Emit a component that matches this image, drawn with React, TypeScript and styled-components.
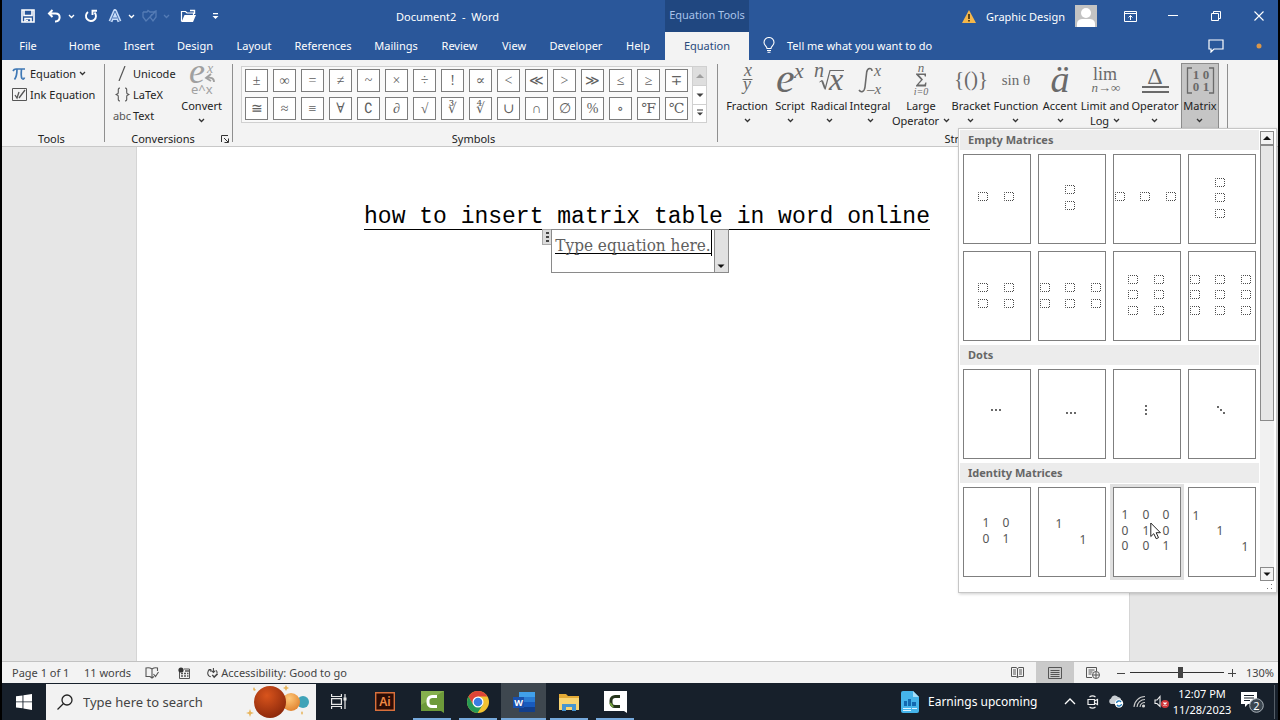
import React from "react";
import styled, { createGlobalStyle, css } from "styled-components";

const ui = `"Noto Sans", "Open Sans", sans-serif`;
const serif = `"Liberation Serif", "DejaVu Serif", serif`;

const GlobalStyle = createGlobalStyle`
  * { box-sizing: border-box; }
  body { margin: 0; background: #000; font-family: ${ui}; font-size: 11px; line-height: 15px; color: #262626; }
  button, input { font: inherit; color: inherit; border: 0; padding: 0; margin: 0; background: none; }
  h1, h2, p { margin: 0; font-size: inherit; font-weight: inherit; }
`;

const Desktop = styled.div`
  min-height: 100vh;
  display: flex;
  flex-direction: column;
  padding: 0 2px;
`;

const WordWindow = styled.div`
  position: relative;
  flex: 1;
  display: flex;
  flex-direction: column;
  background: #f3f3f3;
`;

/* Title bar and tabs */

const Header = styled.header`
  background: #2a579a;
  color: #fff;
`;

const TitleBar = styled.div`
  display: flex;
  align-items: center;
  height: 32px;
`;

const QuickAccess = styled.div`
  display: flex;
  align-items: center;
  padding-left: 13px;
`;

const IconButton = styled.button<{ $w: number; $dim?: boolean }>`
  display: flex;
  align-items: center;
  justify-content: center;
  width: ${(p) => p.$w}px;
  height: 28px;
  opacity: ${(p) => (p.$dim ? 0.3 : 1)};
`;

const WindowTitle = styled.h1`
  width: 440px;
  padding-left: 171px;
  white-space: pre;
`;

const ContextTitle = styled.div`
  width: 84px;
  height: 32px;
  line-height: 30px;
  text-align: center;
  white-space: nowrap;
  background: #204780;
  color: #a9c3ea;
`;

const Account = styled.div`
  display: flex;
  align-items: center;
  gap: 10px;
  margin-left: auto;
  padding-right: 14px;
  white-space: nowrap;
`;

const WindowControls = styled.div`
  display: flex;
  gap: 5px;
`;

const TabRow = styled.nav`
  display: flex;
  height: 28px;
`;

const Tab = styled.button<{ $w: number; $active?: boolean }>`
  width: ${(p) => p.$w}px;
  height: 28px;
  padding-bottom: 2px;
  white-space: nowrap;
  text-align: center;
  ${(p) =>
    p.$active &&
    css`
      margin-left: 5px;
      background: #f3f3f3;
      color: #2a4a7c;
    `}
`;

const TellMe = styled.button`
  display: flex;
  align-items: center;
  gap: 12px;
  padding: 0 0 2px 14px;
  margin-right: auto;
`;

/* Ribbon */

const Ribbon = styled.section`
  display: flex;
  height: 87px;
  border-bottom: 1px solid #c8c8c8;
  background: #f3f3f3;
  color: #222;
`;

const Group = styled.div<{ $w: number }>`
  position: relative;
  display: flex;
  flex-direction: column;
  justify-content: space-between;
  width: ${(p) => p.$w}px;
  padding-top: 3px;
  &::after {
    content: "";
    position: absolute;
    right: 0;
    top: 4px;
    bottom: 4px;
    border-right: 1px solid #8f8f8f;
  }
`;

const GroupBody = styled.div`
  display: flex;
`;

const GroupLabel = styled.div`
  display: flex;
  align-items: center;
  height: 15px;
  padding-right: 4px;
  span { flex: 1; text-align: center; }
`;

const CommandList = styled.div`
  display: flex;
  flex-direction: column;
  padding: 0 0 0 9px;
`;

const Command = styled.button`
  display: flex;
  align-items: center;
  gap: 3px;
  height: 21px;
  white-space: nowrap;
  & > i {
    display: flex;
    justify-content: center;
    width: 16px;
    font-style: normal;
    color: #555;
  }
`;

const BigButton = styled.button<{ $w: number; $pressed?: boolean }>`
  display: flex;
  flex-direction: column;
  align-items: center;
  width: ${(p) => p.$w}px;
  height: 66px;
  white-space: nowrap;
  text-align: center;
  color: #222;
  ${(p) =>
    p.$pressed &&
    css`
      background: #c5c5c5;
      outline: 1px solid #8c8c8c;
      outline-offset: -1px;
    `}
`;

const BigIcon = styled.svg`
  flex: none;
  width: 40px;
  height: 35px;
  overflow: visible;
  fill: #6a6a6a;
  font-family: ${serif};
`;

const BigLabel = styled.span`
  display: flex;
  flex-direction: column;
  align-items: center;
  line-height: 15px;
`;

const LastLine = styled.span`
  display: flex;
  align-items: center;
  gap: 4px;
  min-height: 15px;
`;

const Gallery = styled.div`
  display: flex;
  margin: 3px 0 0 8px;
  border: 1px solid #d0d0d0;
  background: #f9f9f9;
`;

const SymbolGrid = styled.div`
  display: grid;
  grid-template-columns: repeat(16, 23px);
  grid-auto-rows: 23px;
  gap: 5px;
  padding: 2px 4px 2px 3px;
`;

const SymbolButton = styled.button`
  border: 1px solid #7d7d7d;
  background: #fff;
  color: #606060;
  font-family: ${serif};
  font-size: 14px;
  line-height: 20px;
  text-align: center;
`;

const GalleryScroll = styled.div`
  display: grid;
  grid-template-rows: 1fr 1fr 1fr;
  width: 14px;
  margin-left: auto;
  border-left: 1px solid #d0d0d0;
`;

const GalleryStep = styled.button<{ $off?: boolean }>`
  display: flex;
  align-items: center;
  justify-content: center;
  background: ${(p) => (p.$off ? "#dedede" : "#fff")};
  svg { opacity: ${(p) => (p.$off ? 0.3 : 0.8)}; }
  & + & { border-top: 1px solid #d0d0d0; }
`;

const Structures = styled.div`
  display: flex;
  padding-left: 7px;
`;

/* Document */

const Canvas = styled.main`
  flex: 1;
  display: flex;
  justify-content: center;
  padding-right: 15px;
  background: #e6e6e6;
`;

const Page = styled.article`
  display: flex;
  flex-direction: column;
  align-items: center;
  width: 100%;
  max-width: 994px;
  padding-top: 56px;
  background: #fff;
  border-left: 1px solid #d5d5d5;
  border-right: 1px solid #d5d5d5;
`;

const DocHeading = styled.h2`
  height: 27px;
  margin-left: 29px;
  padding-top: 1px;
  border-bottom: 1px solid #000;
  color: #000;
  font-family: "Liberation Mono", monospace;
  font-size: 23px;
  line-height: 26px;
  white-space: nowrap;
`;

const Equation = styled.div`
  display: flex;
  align-items: flex-start;
  margin-left: 6px;
  margin-top: -1px;
`;

const EquationHandle = styled.button`
  display: flex;
  align-items: center;
  justify-content: center;
  width: 9px;
  height: 16px;
  border: 1px solid #aaa;
  border-right: 0;
  background: #dcdcdc;
`;

const EquationFrame = styled.div`
  display: flex;
  height: 44px;
  border: 1px solid #8a8a8a;
  background: #fff;
`;

const EquationText = styled.p`
  height: 26px;
  margin: 0 2px 0 3px;
  padding-top: 4px;
  border-right: 1px solid #000;
  color: #5f5f5f;
  font-family: "DejaVu Serif Condensed", "Liberation Serif", serif;
  font-size: 17px;
  line-height: 22px;
  white-space: nowrap;
  span {
    display: block;
    height: 20px;
    border-bottom: 1px solid #000;
  }
`;

const EquationMenu = styled.button`
  display: flex;
  align-items: flex-end;
  justify-content: center;
  width: 14px;
  padding-bottom: 2px;
  border-left: 1px solid #8a8a8a;
  background: #e1e1e1;
`;

/* Matrix menu */

const Menu = styled.div`
  position: absolute;
  top: 128px;
  right: 1px;
  display: flex;
  width: 319px;
  padding: 1px 2px 11px 1px;
  border: 1px solid #c6c6c6;
  background: #fff;
  box-shadow: 1px 1px 3px rgba(0, 0, 0, 0.2);
`;

const MenuBody = styled.div`
  flex: 1;
`;

const MenuHeading = styled.h2`
  height: 20px;
  padding-left: 8px;
  background: #ececec;
  color: #666;
  font-weight: 700;
  line-height: 19px;
`;

const MenuGrid = styled.div`
  display: grid;
  grid-template-columns: repeat(4, 68px);
  grid-auto-rows: 90px;
  gap: 7px;
  padding: 4px 3px;
`;

const Tile = styled.button<{ $hover?: boolean }>`
  border: 1px solid #7f7f7f;
  background: #fff;
  box-shadow: ${(p) => (p.$hover ? "0 0 0 3px #e0e0e0" : "none")};
  svg {
    display: block;
    overflow: visible;
  }
`;

const MenuScroll = styled.div`
  display: flex;
  flex-direction: column;
  width: 14px;
  margin: 1px 0 0 1px;
  background: #f1f1f1;
`;

const ScrollStep = styled.button`
  display: flex;
  align-items: center;
  justify-content: center;
  height: 14px;
  border: 1px solid #8a8a8a;
  background: #f3f3f3;
`;

const ScrollThumb = styled.div`
  height: 276px;
  margin-bottom: auto;
  border: 1px solid #8a8a8a;
  background: #e6e6e6;
`;

const Grip = styled.svg`
  position: absolute;
  right: 3px;
  bottom: 2px;
`;

const Pointer = styled.svg`
  position: absolute;
  left: 191px;
  top: 393px;
`;

/* Status bar */

const StatusBar = styled.footer`
  display: flex;
  align-items: center;
  height: 22px;
  padding: 0 4px 0 10px;
  border-top: 1px solid #c2c2c2;
  background: #f3f3f3;
  color: #444;
  white-space: nowrap;
`;

const StatusItem = styled.button<{ $w: number }>`
  display: flex;
  align-items: center;
  gap: 3px;
  width: ${(p) => p.$w}px;
`;

const ViewButtons = styled.div`
  display: flex;
  margin-right: 4px;
`;

const ViewButton = styled.button<{ $on?: boolean }>`
  display: flex;
  align-items: center;
  justify-content: center;
  width: 38px;
  height: 21px;
  background: ${(p) => (p.$on ? "#cacaca" : "transparent")};
`;

const StatusRight = styled.div`
  display: flex;
  align-items: center;
  margin-left: auto;
`;

const ZoomButton = styled.button`
  display: flex;
  width: 10px;
  justify-content: center;
`;

const ZoomSlider = styled.input`
  appearance: none;
  width: 94px;
  height: 12px;
  margin: 0 3px 0 4px;
  background: linear-gradient(#333, #333) center / 100% 1px no-repeat;
  &::-webkit-slider-thumb {
    appearance: none;
    width: 5px;
    height: 11px;
    background: #444;
  }
`;

const ZoomValue = styled.span`
  width: 37px;
  text-align: right;
`;

/* Taskbar */

const Taskbar = styled.div`
  display: flex;
  align-items: stretch;
  height: 37px;
  background: #17202b;
  color: #fff;
`;

const TaskButton = styled.button<{ $w: number; $open?: boolean; $active?: boolean }>`
  display: flex;
  align-items: center;
  justify-content: center;
  width: ${(p) => p.$w}px;
  background: ${(p) => (p.$active ? "#3e474f" : "transparent")};
  box-shadow: ${(p) => (p.$open || p.$active ? "inset 0 -2px #76a9dc" : "none")};
  border-left: ${(p) => (p.$open ? "4px solid transparent" : "0")};
  border-right: ${(p) => (p.$open ? "4px solid transparent" : "0")};
`;

const Search = styled.label`
  display: flex;
  align-items: center;
  width: 270px;
  padding: 0 2px 0 11px;
  border-top: 1px solid #17202b;
  background: #f2f2f2;
  color: #333;
  input {
    flex: 1;
    min-width: 0;
    padding-left: 10px;
    font-size: 13px;
    outline: none;
  }
  input::placeholder { color: #444; opacity: 1; }
`;

const Tray = styled.div`
  display: flex;
  align-items: center;
  margin-left: auto;
`;

const Widget = styled.button`
  display: flex;
  align-items: center;
  gap: 9px;
  width: 157px;
  font-size: 12px;
  white-space: nowrap;
`;

const TrayButton = styled.button<{ $w: number }>`
  display: flex;
  align-items: center;
  justify-content: center;
  width: ${(p) => p.$w}px;
  height: 34px;
`;

const Clock = styled.button`
  width: 60px;
  font-size: 11px;
  line-height: 16px;
  text-align: center;
  white-space: nowrap;
`;

/* Small drawings */

const Chevron = ({ color = "#333" }: { color?: string }) => (
  <svg width="7" height="5" viewBox="0 0 7 5" fill="none" stroke={color} strokeWidth="1.3">
    <path d="M1 1l2.5 2.5L6 1" />
  </svg>
);

const Triangle = ({ up, line }: { up?: boolean; line?: boolean }) => (
  <svg width="8" height="8" viewBox="0 0 8 8" fill="#111">
    {line && <path d="M1 .5h6v1H1z" />}
    <path d={up ? "M4 2l4 4H0z" : line ? "M1 3.5h6L4 6.5z" : "M0.5 2.500h7L4 6z"} />
  </svg>
);

const it = { fontStyle: "italic" as const };

type Structure = { name: string[]; w: number; art: React.ReactNode; pressed?: boolean };

const structures: Structure[] = [
  {
    name: ["Fraction"],
    w: 44,
    art: (
      <g {...it} textAnchor="middle" fontSize="18">
        <text x="21" y="13">x</text>
        <path d="M15.500 16h10v1h-10z" />
        <text x="20" y="27">y</text>
      </g>
    ),
  },
  {
    name: ["Script"],
    w: 42,
    art: (
      <g {...it}>
        <text x="6" y="29" fontSize="42">e</text>
        <text x="24" y="15" fontSize="22">x</text>
      </g>
    ),
  },
  {
    name: ["Radical"],
    w: 36,
    art: (
      <g {...it}>
        <text x="5" y="14" fontSize="20">n</text>
        <path d="M10.500 19l2.500-1.500" fill="none" stroke="#6a6a6a" />
        <path d="M13 17.500l3 8" fill="none" stroke="#6a6a6a" strokeWidth="2" />
        <path d="M16 26.500L21 7.500H35" fill="none" stroke="#6a6a6a" strokeWidth="1.200" />
        <text x="20" y="27" fontSize="32">x</text>
      </g>
    ),
  },
  {
    name: ["Integral"],
    w: 46,
    art: (
      <g {...it}>
        <path
          d="M22 8c0-3.500-4.500-3.500-5.300 1l-1.700 15c-.6 5-4 6-6 3"
          fill="none"
          stroke="#6a6a6a"
          strokeWidth="1.600"
        />
        <text x="24" y="13" fontSize="16">x</text>
        <text x="17" y="31" fontSize="15">–x</text>
      </g>
    ),
  },
  {
    name: ["Large", "Operator"],
    w: 56,
    art: (
      <g textAnchor="middle">
        <text x="20" y="9" fontSize="13" {...it}>n</text>
        <path d="M15 10.500h10v3h-1.200l-.5-1.600H18l4 4.600-4.500 5h6l.8-2H25.500l-.5 4H15v-1l5-5.800-5-5.200z" />
        <text x="20" y="32" fontSize="10" {...it}>i=0</text>
      </g>
    ),
  },
  {
    name: ["Bracket"],
    w: 44,
    art: <text x="20" y="23" fontSize="21" textAnchor="middle">{"{()}"}</text>,
  },
  {
    name: ["Function"],
    w: 46,
    art: <text x="20" y="22" fontSize="15" textAnchor="middle">sin θ</text>,
  },
  {
    name: ["Accent"],
    w: 42,
    art: <text x="20" y="29" fontSize="38" textAnchor="middle" {...it}>ä</text>,
  },
  {
    name: ["Limit and", "Log"],
    w: 48,
    art: (
      <g textAnchor="middle">
        <text x="20" y="17" fontSize="18">lim</text>
        <text x="21" y="29" fontSize="13" {...it}>n→∞</text>
      </g>
    ),
  },
  {
    name: ["Operator"],
    w: 52,
    art: (
      <g>
        <text x="20" y="21" fontSize="24" textAnchor="middle">Δ</text>
        <path d="M7 23h27v2H7zM7 28h27v2H7z" />
      </g>
    ),
  },
  {
    name: ["Matrix"],
    w: 38,
    pressed: true,
    art: (
      <g>
        <path d="M12 5H7.500v25H12M29 5h4.500v25H29" fill="none" stroke="#6a6a6a" strokeWidth="1.300" />
        <g fontSize="13" fontWeight="700" textAnchor="middle">
          <text x="16" y="16">1</text>
          <text x="26" y="16">0</text>
          <text x="16" y="28">0</text>
          <text x="26" y="28">1</text>
        </g>
      </g>
    ),
  },
];

const symbols = "±∞=≠~×÷!∝<≪>≫≤≥∓≅≈≡∀∁∂√∛∜∪∩∅%∘℉℃".split("");

const tabs: [string, number][] = [
  ["File", 52],
  ["Home", 61],
  ["Insert", 48],
  ["Design", 64],
  ["Layout", 54],
  ["References", 84],
  ["Mailings", 62],
  ["Review", 65],
  ["View", 44],
  ["Developer", 80],
  ["Help", 44],
];

const BoxMatrix = ({ xs, ys }: { xs: number[]; ys: number[] }) => (
  <svg
    width="66"
    height="88"
    viewBox="0 0 66 88"
    fill="none"
    stroke="#4a4a4a"
    strokeDasharray="1 1"
    strokeDashoffset="0.5"
  >
    {ys.map((y) => xs.map((x) => <path key={`${x}-${y}`} d={`M${x - 4.5} ${y - 4.5}h9v8h-9z`} />))}
  </svg>
);

const Dots = ({ at }: { at: [number, number][] }) => (
  <svg width="66" height="88" viewBox="0 0 66 88" fill="#222">
    {at.map(([x, y]) => (
      <circle key={`${x}-${y}`} cx={x} cy={y} r="0.900" />
    ))}
  </svg>
);

const Digits = ({ at }: { at: [string, number, number][] }) => (
  <svg width="66" height="88" viewBox="0 0 66 88" fill="#555" fontFamily={ui} fontSize="12" textAnchor="middle">
    {at.map(([d, x, y]) => (
      <text key={`${x}-${y}`} x={x} y={y}>{d}</text>
    ))}
  </svg>
);

const emptyTiles: [string, number[], number[]][] = [
  ["1 by 2", [19, 45], [42]],
  ["2 by 1", [31], [35, 51]],
  ["1 by 3", [6, 31, 57], [42]],
  ["3 by 1", [31], [28, 43, 59]],
  ["2 by 2", [19, 45], [36, 52]],
  ["2 by 3", [6, 31, 57], [36, 52]],
  ["3 by 2", [19, 45], [28, 43, 59]],
  ["3 by 3", [6, 31, 57], [28, 43, 59]],
];

const dotTiles: [string, [number, number][]][] = [
  ["Midline dots", [[28, 40], [32, 40], [36, 40]]],
  ["Baseline dots", [[28, 43], [32, 43], [36, 43]]],
  ["Vertical dots", [[32, 36], [32, 40], [32, 44]]],
  ["Diagonal dots", [[29, 37], [32, 40], [35, 43]]],
];

const identityTiles: [string, [string, number, number][]][] = [
  ["2 by 2 identity", [["1", 22, 39], ["0", 42, 39], ["0", 22, 55], ["1", 42, 55]]],
  ["2 by 2 identity, blanks", [["1", 20, 40], ["1", 44, 56]]],
  ["3 by 3 identity", [
    ["1", 11, 31], ["0", 32, 31], ["0", 52, 31],
    ["0", 11, 47], ["1", 32, 47], ["0", 52, 47],
    ["0", 11, 62], ["0", 32, 62], ["1", 52, 62],
  ]],
  ["3 by 3 identity, blanks", [["1", 7, 32], ["1", 31, 47], ["1", 56, 63]]],
];

const CamtasiaIcon = ({ light }: { light?: boolean }) => (
  <svg width="23" height="22" viewBox="0 0 23 22">
    <path d="M0 0h23v22l-3-2H0z" fill={light ? "#fff" : "#6d9a3a"} />
    {!light && <path d="M0 0h23L0 14z" fill="#86b04e" />}
    <path
      d="M16 5.500h-5a4 4 0 0 0-4 4v2a4 4 0 0 0 4 4h5"
      fill="none"
      stroke={light ? "#26351c" : "#fff"}
      strokeWidth="3"
    />
    {light && <path d="M6 12l3 4" stroke="#76a53c" strokeWidth="2" />}
  </svg>
);

const TitleIcons = () => (
  <QuickAccess>
    <IconButton $w={26} aria-label="Save">
      <svg width="14" height="14" viewBox="0 0 14 14" fill="none" stroke="#fff" strokeWidth="1.600">
        <path d="M1 1h12v12H1zM3 1.500v5h8v-5M4 13V9.500h6V13" />
        <path d="M5 11.500h2" />
      </svg>
    </IconButton>
    <IconButton $w={26} aria-label="Undo">
      <svg width="14" height="14" viewBox="0 0 14 14" fill="none" stroke="#fff" strokeWidth="2">
        <path d="M5.500 1L2 4.500 5.500 8M2 4.500H8.500c5.500 0 5.500 7.500 0 8H8" />
      </svg>
    </IconButton>
    <IconButton $w={8} aria-label="Undo history"><Chevron color="#fff" /></IconButton>
    <IconButton $w={32} aria-label="Repeat">
      <svg width="14" height="14" viewBox="0 0 14 14" fill="none" stroke="#fff" strokeWidth="1.900">
        <path d="M4 3a5 5 0 1 0 6.500.5M13 1.800H8.500V6" />
      </svg>
    </IconButton>
    <IconButton $w={16} aria-label="Text effects">
      <svg width="14" height="14" viewBox="0 0 14 14" fill="none" strokeLinejoin="round">
        <path d="M2.500 12.500L7 2l4.500 10.500M4.500 9h5" stroke="#c6dbf8" strokeWidth="4" />
        <path d="M2.500 12.500L7 2l4.500 10.500M4.500 9h5" stroke="#4a74b4" strokeWidth="1" />
      </svg>
    </IconButton>
    <IconButton $w={16} aria-label="Text effects options"><Chevron color="#fff" /></IconButton>
    <IconButton $w={22} $dim aria-label="Link">
      <svg width="16" height="14" viewBox="0 0 16 14" fill="none" stroke="#b6d0f4" strokeWidth="1.300">
        <path d="M1 3h4l1-1.500L8 3h3l3-1v6l-3 4-3-4 2-3M1 3v5l3 4 9-9" />
      </svg>
    </IconButton>
    <IconButton $w={10} $dim aria-label="Link options"><Chevron color="#b6d0f4" /></IconButton>
    <IconButton $w={34} aria-label="Open">
      <svg width="17" height="14" viewBox="0 0 17 14">
        <path d="M1.500 12.500V2.500h4L7 4h6.500v3" fill="none" stroke="#fff" strokeWidth="1.200" />
        <path d="M4.500 6H16l-3 7H1.500z" fill="#fff" />
        <path d="M10 1.500h4.500V5" fill="none" stroke="#fff" strokeWidth="1.400" />
      </svg>
    </IconButton>
    <IconButton $w={20} aria-label="Customize Quick Access Toolbar">
      <svg width="7" height="7" viewBox="0 0 7 7" fill="#fff"><path d="M1 0h5v1.200H1zM0.500 3h6L3.500 6z" /></svg>
    </IconButton>
  </QuickAccess>
);

export default function App() {
  return (
    <Desktop>
      <GlobalStyle />
      <WordWindow>
        <Header>
          <TitleBar>
            <TitleIcons />
            <WindowTitle>{"Document2  -  Word"}</WindowTitle>
            <ContextTitle>Equation Tools</ContextTitle>
            <Account>
              <svg width="14" height="13" viewBox="0 0 14 13">
                <path d="M7 0l7 13H0z" fill="#f5b74a" />
                <path d="M6.200 4h1.600v5H6.200zM6.200 10h1.600v1.600H6.200z" fill="#3a2a10" />
              </svg>
              <span>Graphic Design</span>
              <svg width="22" height="22" viewBox="0 0 22 22">
                <path d="M0 0h22v22H0z" fill="#c3c3c3" />
                <circle cx="11" cy="8" r="5" fill="#fff" />
                <path d="M2 22v-3c0-4 3-5 6-5h6c3 0 6 1 6 5v3z" fill="#fff" />
              </svg>
            </Account>
            <WindowControls>
              <IconButton $w={38} aria-label="Ribbon display options">
                <svg width="13" height="11" viewBox="0 0 13 11" fill="none" stroke="#fff">
                  <path d="M.5.5h12v10H.5zM.5 2.500h12M6.500 9V4.500M4.500 6.500l2-2 2 2" />
                </svg>
              </IconButton>
              <IconButton $w={38} aria-label="Minimize">
                <svg width="10" height="10" viewBox="0 0 10 10" stroke="#fff"><path d="M0 4.500h10" /></svg>
              </IconButton>
              <IconButton $w={38} aria-label="Restore">
                <svg width="10" height="10" viewBox="0 0 10 10" fill="none" stroke="#fff">
                  <path d="M.5 2.500h7v7h-7zM2.500 2.500v-2h7v7h-2" />
                </svg>
              </IconButton>
              <IconButton $w={38} aria-label="Close">
                <svg width="10" height="10" viewBox="0 0 10 10" stroke="#fff" strokeWidth="1.100">
                  <path d="M.5.5l9 9M9.500.5l-9 9" />
                </svg>
              </IconButton>
            </WindowControls>
          </TitleBar>
          <TabRow>
            {tabs.map(([name, w]) => (
              <Tab key={name} $w={w}>{name}</Tab>
            ))}
            <Tab $w={84} $active>Equation</Tab>
            <TellMe>
              <svg width="12" height="16" viewBox="0 0 12 16" fill="none" stroke="#fff" strokeWidth="1.100">
                <path d="M4 11.500C4 9 1 8.500 1 5.500a5 5 0 0 1 10 0c0 3-3 3.500-3 6zM4 13.500h4M4.500 15.300h3" />
              </svg>
              Tell me what you want to do
            </TellMe>
            <WindowControls>
              <IconButton $w={38} aria-label="Comments">
                <svg width="16" height="14" viewBox="0 0 16 14" fill="none" stroke="#fff" strokeWidth="1.200">
                  <path d="M1 1h14v9H6l-3 3v-3H1z" />
                </svg>
              </IconButton>
              <IconButton $w={38} aria-label="Notifications">
                <svg width="6" height="6" viewBox="0 0 6 6"><circle cx="3" cy="3" r="2.500" fill="#d9964a" /></svg>
              </IconButton>
            </WindowControls>
          </TabRow>
        </Header>

        <Ribbon>
          <Group $w={103}>
            <GroupBody>
              <CommandList>
                <Command>
                  <i>
                    <svg width="14" height="14" viewBox="0 0 14 14" fill="none" stroke="#3f78b5" strokeWidth="1.700">
                      <path d="M1 4c1-2 2-2 3-2h9M5 2c0 5-.5 8-2.500 10.500M9.500 2c-.5 5-.5 8 .5 9.500 1 1 2 .5 2.500-1" />
                    </svg>
                  </i>
                  Equation <Chevron />
                </Command>
                <Command>
                  <i>
                    <svg width="15" height="13" viewBox="0 0 15 13" fill="none" stroke="#555">
                      <path d="M.5.5h14v12H.5z" />
                      <path d="M3 7l2 3 2-6M7 10l6-8" strokeWidth="1.300" />
                    </svg>
                  </i>
                  Ink Equation
                </Command>
              </CommandList>
            </GroupBody>
            <GroupLabel><span>Tools</span></GroupLabel>
          </Group>

          <Group $w={128}>
            <GroupBody>
              <CommandList>
                <Command>
                  <i><svg width="8" height="15" viewBox="0 0 8 15" stroke="#555" strokeWidth="1.200"><path d="M1 15L7 0" /></svg></i>
                  Unicode
                </Command>
                <Command>
                  <i>
                    <svg width="15" height="15" viewBox="0 0 15 15" fill="none" stroke="#555" strokeWidth="1.100">
                      <path d="M5 1C2 1 4 5 3 6.500L1 7.500l2 1C4 10 2 14 5 14M10 1c3 0 1 4 2 5.500l2 1-2 1c-1 1.500 1 5.500-2 5.500" />
                    </svg>
                  </i>
                  LaTeX
                </Command>
                <Command><i>abc</i>Text</Command>
              </CommandList>
              <BigButton $w={52}>
                <BigIcon viewBox="0 0 40 35" opacity="0.600">
                  <text x="7" y="20" fontSize="36" {...it}>e</text>
                  <text x="25" y="10" fontSize="14" {...it}>x</text>
                  <path d="M29 11l-5 4 5 3M24 15c5-1 8 0 8 4" fill="none" stroke="#6a6a6a" strokeWidth="1.800" />
                  <text x="9" y="31" fontSize="13" fontFamily={ui}>e^x</text>
                </BigIcon>
                <BigLabel>Convert<LastLine><Chevron /></LastLine></BigLabel>
              </BigButton>
            </GroupBody>
            <GroupLabel>
              <span>Conversions</span>
              <svg width="8" height="8" viewBox="0 0 8 8" fill="none" stroke="#333">
                <path d="M.5 7V.5H7M3 3l4 4M7.500 3.500v4h-4" />
              </svg>
            </GroupLabel>
          </Group>

          <Group $w={485}>
            <GroupBody>
              <Gallery>
                <SymbolGrid>
                  {symbols.map((s) => (
                    <SymbolButton key={s}>{s}</SymbolButton>
                  ))}
                </SymbolGrid>
                <GalleryScroll>
                  <GalleryStep $off aria-label="Previous row"><Triangle up /></GalleryStep>
                  <GalleryStep aria-label="Next row"><Triangle /></GalleryStep>
                  <GalleryStep aria-label="More symbols"><Triangle line /></GalleryStep>
                </GalleryScroll>
              </Gallery>
            </GroupBody>
            <GroupLabel><span>Symbols</span></GroupLabel>
          </Group>

          <Group $w={510}>
            <Structures>
              {structures.map((s) => (
                <BigButton key={s.name[0]} $w={s.w} $pressed={s.pressed}>
                  <BigIcon viewBox="0 0 40 35">{s.art}</BigIcon>
                  <BigLabel>
                    {s.name[0]}
                    <LastLine>{s.name[1]}<Chevron /></LastLine>
                  </BigLabel>
                </BigButton>
              ))}
            </Structures>
            <GroupLabel><span>Structures</span></GroupLabel>
          </Group>
        </Ribbon>

        <Canvas>
          <Page>
            <DocHeading>how to insert matrix table in word online</DocHeading>
            <Equation>
              <EquationHandle aria-label="Move equation">
                <svg width="5" height="11" viewBox="0 0 5 11" fill="#444">
                  <path d="M1 0h3v2H1zM1 4h3v2H1zM1 8h3v2H1z" />
                </svg>
              </EquationHandle>
              <EquationFrame>
                <EquationText><span>Type equation here.</span></EquationText>
                <EquationMenu aria-label="Equation options"><Triangle /></EquationMenu>
              </EquationFrame>
            </Equation>
          </Page>
        </Canvas>

        <Menu>
          <MenuBody>
            <MenuHeading>Empty Matrices</MenuHeading>
            <MenuGrid>
              {emptyTiles.map(([name, xs, ys]) => (
                <Tile key={name} aria-label={name}><BoxMatrix xs={xs} ys={ys} /></Tile>
              ))}
            </MenuGrid>
            <MenuHeading>Dots</MenuHeading>
            <MenuGrid>
              {dotTiles.map(([name, at]) => (
                <Tile key={name} aria-label={name}><Dots at={at} /></Tile>
              ))}
            </MenuGrid>
            <MenuHeading>Identity Matrices</MenuHeading>
            <MenuGrid>
              {identityTiles.map(([name, at], i) => (
                <Tile key={name} aria-label={name} $hover={i === 2}><Digits at={at} /></Tile>
              ))}
            </MenuGrid>
          </MenuBody>
          <MenuScroll>
            <ScrollStep aria-label="Scroll up"><Triangle up /></ScrollStep>
            <ScrollThumb />
            <ScrollStep aria-label="Scroll down"><Triangle /></ScrollStep>
          </MenuScroll>
          <Grip width="6" height="6" viewBox="0 0 6 6" fill="#777">
            <path d="M4 0h1v1H4zM4 4h1v1H4zM0 4h1v1H0z" />
          </Grip>
          <Pointer width="12" height="18" viewBox="0 0 12 18" fill="#fff" stroke="#222">
            <path d="M.8 1v13.500l3-2.800 2.400 5 2.300-1-2.300-5h4.200z" />
          </Pointer>
        </Menu>

        <StatusBar>
          <StatusItem $w={72}>Page 1 of 1</StatusItem>
          <StatusItem $w={61}>11 words</StatusItem>
          <StatusItem $w={33} aria-label="Proofing">
            <svg width="14" height="12" viewBox="0 0 14 12" fill="none" stroke="#555" strokeWidth="1.100">
              <path d="M7 10.500V2C5 .5 3 .5 1 1v8.500h4l2 1.500 2-1.500M7 2c2-1.500 4-1.500 5.500-1v3M8.500 7l2 2.500L13.500 5" />
            </svg>
          </StatusItem>
          <StatusItem $w={29} aria-label="Macro recording">
            <svg width="13" height="12" viewBox="0 0 13 12">
              <path d="M1.500 4.500v7h10V2H6" fill="none" stroke="#555" />
              <circle cx="3" cy="3" r="2.600" fill="#333" />
              <path d="M3 6.500h2M6 6.500h2M9 6.500h1.500M3 9h2M6 9h2M9 9h1.500M7 4h4" stroke="#555" strokeWidth="1.400" />
            </svg>
          </StatusItem>
          <StatusItem $w={140}>
            <svg width="15" height="14" viewBox="0 0 15 14" fill="none" stroke="#444" strokeWidth="1.400">
              <path d="M4 2.500A5 5 0 0 0 5 12M2 2.500h3v3M8.500.5v6M6 4l2.500 2.500L11 4M12 3.500c1.500 1.500 1.500 3 1 4" />
              <path d="M7 9.500l2.500 3L14 8" strokeWidth="2" />
            </svg>
            Accessibility: Good to go
          </StatusItem>
          <StatusRight>
            <ViewButtons>
              <ViewButton aria-label="Read mode">
                <svg width="13" height="11" viewBox="0 0 13 11" fill="none" stroke="#555">
                  <path d="M6.500 10.500V1.500L5 .5H.5v9h4.500l1.500 1 1.500-1h4.500v-9H8l-1.500 1M2 3h3M2 5h3M2 7h3M8 3h3M8 5h3M8 7h3" />
                </svg>
              </ViewButton>
              <ViewButton $on aria-label="Print layout">
                <svg width="14" height="12" viewBox="0 0 14 12" fill="none" stroke="#555">
                  <path d="M.5.5h13v11H.5zM2.500 3.500h9M2.500 5.500h9M2.500 7.500h9M2.500 9.500h9" />
                </svg>
              </ViewButton>
              <ViewButton aria-label="Web layout">
                <svg width="14" height="12" viewBox="0 0 14 12" fill="none" stroke="#555">
                  <path d="M6 10.500H.5V.5h10V4M2.500 3h6M2.500 5h4M2.500 7h3" />
                  <circle cx="10" cy="8" r="3.500" />
                  <path d="M7 8h6M10 5v6" />
                </svg>
              </ViewButton>
            </ViewButtons>
            <ZoomButton aria-label="Zoom out">
              <svg width="8" height="8" viewBox="0 0 8 8" stroke="#444"><path d="M0 4.500h8" /></svg>
            </ZoomButton>
            <ZoomSlider type="range" min="0" max="100" defaultValue="54" aria-label="Zoom" />
            <ZoomButton aria-label="Zoom in">
              <svg width="8" height="8" viewBox="0 0 8 8" stroke="#444"><path d="M0 4.500h8M4.500 0v8" /></svg>
            </ZoomButton>
            <ZoomValue>130%</ZoomValue>
          </StatusRight>
        </StatusBar>
      </WordWindow>

      <Taskbar>
        <TaskButton $w={44} aria-label="Start">
          <svg width="16" height="16" viewBox="0 0 16 16" fill="#fff">
            <path d="M0 2.300L6.500 1.400v6H0zM7.400 1.300L16 0v7.400H7.400zM0 8.300h6.500v6L0 13.500zM7.400 8.300H16V16l-8.600-1.400z" />
          </svg>
        </TaskButton>
        <Search>
          <svg width="16" height="16" viewBox="0 0 16 16" fill="none" stroke="#222" strokeWidth="1.300">
            <circle cx="10" cy="6" r="5" />
            <path d="M6.500 9.500L.5 15.500" />
          </svg>
          <input placeholder="Type here to search" aria-label="Search" />
          <svg width="68" height="34" viewBox="0 0 68 34">
            <defs>
              <radialGradient id="planet" cx="0.400" cy="0.300" r="0.800">
                <stop offset="0" stopColor="#d9541c" />
                <stop offset="1" stopColor="#84240a" />
              </radialGradient>
              <radialGradient id="sun" cx="0.400" cy="0.300" r="0.800">
                <stop offset="0" stopColor="#ffc878" />
                <stop offset="1" stopColor="#dd7c28" />
              </radialGradient>
            </defs>
            <circle cx="57" cy="17" r="6" fill="#3fa3b8" />
            <circle cx="45" cy="17" r="9" fill="url(#sun)" />
            <circle cx="24" cy="17" r="16" fill="url(#planet)" />
            <path d="M4 24l1 3 3 1-3 1-1 3-1-3-3-1 3-1zM40 0l1 2 2 1-2 1-1 2-1-2-2-1 2-1zM8 2l1 2 1 1-2 1-1-2zM56 26l1 2-1 2-1-2z" fill="#e8b45a" />
          </svg>
        </Search>
        <TaskButton $w={45} aria-label="Task view">
          <svg width="16" height="15" viewBox="0 0 16 15" fill="none" stroke="#e8e8e8" strokeWidth="1.200">
            <path d="M.6 0v2.500h9.800V0M.6 4.600h9.800v5.800H.6zM.6 15v-2.500h9.800V15M14 0v15" />
            <path d="M12.500 5h3" strokeWidth="3" />
          </svg>
        </TaskButton>
        <TaskButton $w={48} aria-label="Illustrator">
          <svg width="20" height="19" viewBox="0 0 20 19">
            <path d="M.7.7h18.600v17.600H.7z" fill="#2b0c05" stroke="#d9703c" strokeWidth="1.400" />
            <text x="10" y="14" fontFamily={ui} fontSize="12" fontWeight="600" fill="#f08a45" textAnchor="middle">Ai</text>
          </svg>
        </TaskButton>
        <TaskButton $w={46} $open aria-label="Camtasia"><CamtasiaIcon /></TaskButton>
        <TaskButton $w={46} $open aria-label="Chrome">
          <svg width="22" height="22" viewBox="0 0 22 22">
            <circle cx="11" cy="11" r="11" fill="#f2c230" />
            <path d="M1.500 5.500A11 11 0 0 1 20.500 5.500H11L6.200 13.700z" fill="#dd4437" />
            <path d="M1.500 5.500A11 11 0 0 0 10.500 22l5.300-8.300H6.200z" fill="#269a55" />
            <circle cx="11" cy="11" r="5.500" fill="#fff" />
            <circle cx="11" cy="11" r="4.300" fill="#3b7de0" />
          </svg>
        </TaskButton>
        <TaskButton $w={45} $active aria-label="Word">
          <svg width="22" height="20" viewBox="0 0 22 20">
            <path d="M6 0h16v5H6z" fill="#41a0ea" />
            <path d="M6 5h16v5H6z" fill="#2b7cd3" />
            <path d="M6 10h16v5H6z" fill="#185abd" />
            <path d="M6 15h16v5H6z" fill="#123f8c" />
            <path d="M0 5h11v11H0z" fill="#1a50ac" />
            <text x="5.500" y="14" fontFamily={ui} fontSize="9" fontWeight="700" fill="#fff" textAnchor="middle">W</text>
          </svg>
        </TaskButton>
        <TaskButton $w={46} $open aria-label="File Explorer">
          <svg width="20" height="18" viewBox="0 0 20 18">
            <path d="M0 1h7l2 2h11v14H0z" fill="#e3aa36" />
            <path d="M0 5h20v12H0z" fill="#f8d472" />
            <path d="M3 18v-7h14v7h-4v-4H7v4z" fill="#4795cf" />
          </svg>
        </TaskButton>
        <TaskButton $w={46} $open aria-label="Camtasia recorder"><CamtasiaIcon light /></TaskButton>

        <Tray>
          <Widget>
            <svg width="18" height="22" viewBox="0 0 18 22">
              <path d="M2 0h10l6 6v14a2 2 0 0 1-2 2H2a2 2 0 0 1-2-2V2a2 2 0 0 1 2-2z" fill="#45b4ea" />
              <path d="M12 0l6 6h-6z" fill="#a5e0fa" />
              <path d="M3 10h3v5H3zM7 8h3v7H7zM11 11h4v4h-4z" fill="#1268b0" />
              <path d="M2 17.500h8M11 17.500h5M2 19.500h8" stroke="#d8f2ff" />
            </svg>
            Earnings upcoming
          </Widget>
          <TrayButton $w={24} aria-label="Show hidden icons">
            <svg width="12" height="7" viewBox="0 0 12 7" fill="none" stroke="#fff" strokeWidth="1.300"><path d="M1 6l5-5 5 5" /></svg>
          </TrayButton>
          <TrayButton $w={22} aria-label="Meet now">
            <svg width="12" height="14" viewBox="0 0 12 14" fill="none" stroke="#eee" strokeWidth="1.200">
              <path d="M1 4.500h6.500v5H1zM7.500 6l3-1.500v5l-3-1.500M2.500 2c2-1.500 4-1.500 6 0M2.500 12c2 1.500 4 1.500 6 0" />
            </svg>
          </TrayButton>
          <TrayButton $w={24} aria-label="OneDrive">
            <svg width="16" height="13" viewBox="0 0 16 13">
              <path d="M3 9a3 3 0 0 1 0-5.500A4 4 0 0 1 10 2a3.500 3.500 0 0 1 3 4v3z" fill="#c9ced3" />
              <circle cx="11" cy="8.500" r="4.200" fill="#fff" />
              <path d="M8.500 8a2.500 2.500 0 0 1 4.500-1M13.500 9a2.500 2.500 0 0 1-4.500 1" fill="none" stroke="#1d78b8" strokeWidth="1.300" />
            </svg>
          </TrayButton>
          <TrayButton $w={22} aria-label="Wi-Fi">
            <svg width="12" height="13" viewBox="0 0 12 13" fill="none" stroke="#ccc" strokeWidth="1.100">
              <path d="M1 12A11 11 0 0 1 12 1.500M4 12a8 8 0 0 1 8-7.500M7 12a5 5 0 0 1 5-4.500" />
              <circle cx="10.500" cy="11" r="1" fill="#fff" />
            </svg>
          </TrayButton>
          <TrayButton $w={22} aria-label="Volume muted">
            <svg width="15" height="14" viewBox="0 0 15 14">
              <path d="M1 5h2l3-3.500v10L3 8.500H1z" fill="none" stroke="#eee" strokeWidth="1.100" />
              <circle cx="11" cy="9" r="4" fill="#d2373a" />
              <path d="M9.500 7.500l3 3M12.500 7.500l-3 3" stroke="#fff" strokeWidth="1.200" />
            </svg>
          </TrayButton>
          <Clock>12:07 PM<br />11/28/2023</Clock>
          <TrayButton $w={40} aria-label="Notifications">
            <svg width="23" height="22" viewBox="0 0 23 22">
              <path d="M0 1h16v12H7l-3 3v-3H0z" fill="#fff" />
              <path d="M3 4.500h10M3 7h10M3 9.500h6" stroke="#17202b" />
              <circle cx="15.500" cy="14.500" r="6.800" fill="#3b4650" stroke="#a9b1b8" />
              <text x="15.500" y="18.500" fontFamily={ui} fontSize="11" fill="#fff" textAnchor="middle">2</text>
            </svg>
          </TrayButton>
          <TrayButton $w={6} aria-label="Show desktop">
            <svg width="2" height="34" viewBox="0 0 2 34"><path d="M0 0h1v34H0z" fill="#555e67" /></svg>
          </TrayButton>
        </Tray>
      </Taskbar>
    </Desktop>
  );
}
